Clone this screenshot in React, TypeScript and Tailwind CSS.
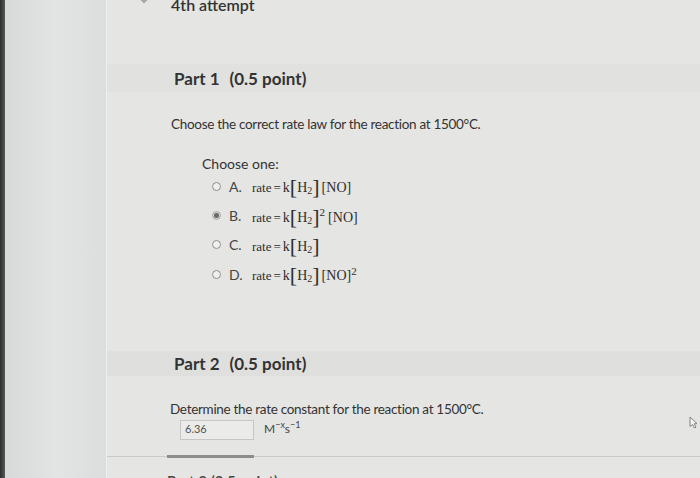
import React from "react";

const lato = { fontFamily: "Lato, 'Open Sans', sans-serif" };

function Radio({ checked }: { checked?: boolean }) {
  if (checked) {
    return (
      <span className="flex h-[9px] w-[9px] items-center justify-center rounded-full bg-[#cfcfcf] border border-[#b0b0b0]">
        <span className="h-[5px] w-[5px] rounded-full bg-[#6a6a6a]" />
      </span>
    );
  }
  return <span className="h-[9px] w-[9px] rounded-full border border-[#8e8e8e] bg-[#efefed]" />;
}

function Br({ c }: { c: string }) {
  return <span className="text-[22px] leading-none font-light relative top-[2px]">{c}</span>;
}

function H2() {
  return (
    <span>
      <Br c="[" />
      H<sub className="text-[10px] relative top-[2px]">2</sub>
      <Br c="]" />
    </span>
  );
}

function Formula({ kind }: { kind: "A" | "B" | "C" | "D" }) {
  return (
    <span
      className="flex items-baseline text-[14px] text-[#2e2e2e]"
      style={{ fontFamily: "'Liberation Serif', 'DejaVu Serif', serif" }}
    >
      <span className="text-[13px]">rate</span>
      <span className="mx-[2px] text-[13px]">=</span>
      <span>k</span>
      <H2 />
      {kind === "B" && <sup className="text-[11px] mr-[1px]">2</sup>}
      {kind !== "C" && <span className="ml-[2px]">[NO]</span>}
      {kind === "D" && <sup className="text-[11px]">2</sup>}
    </span>
  );
}

function Option({ letter, checked }: { letter: "A" | "B" | "C" | "D"; checked?: boolean }) {
  return (
    <div className="flex items-center h-[29.3px]">
      <div className="w-[17px] flex items-center">
        <Radio checked={checked} />
      </div>
      <span className="text-[14px] text-[#444] w-[23px]" style={lato}>
        {letter}.
      </span>
      <Formula kind={letter} />
    </div>
  );
}

export default function App() {
  return (
    <div className="relative flex h-[478px] w-[700px] overflow-hidden bg-[#e5e5e3]" style={lato}>
      {/* dark left edge */}
      <div className="w-[5px] shrink-0 bg-gradient-to-r from-[#2e2e2e] to-[#5a5a5a]" />
      {/* sidebar */}
      <div className="w-[102px] shrink-0 bg-gradient-to-r from-[#d8dada] via-[#e3e5e4] to-[#dcdedd] border-r border-[#efefed]" />
      {/* main */}
      <div className="relative flex flex-1 flex-col bg-[#e5e5e3] text-[#333]">
        {/* top: attempt */}
        <div className="flex items-end h-[12px] pl-[31px]">
          <svg width="12" height="8" viewBox="0 0 12 8" className="mb-[8px]">
            <path d="M1 1 L6 6 L11 1" fill="none" stroke="#a8a8a8" strokeWidth="2.2" />
          </svg>
          <span className="ml-[21px] text-[16px] font-semibold text-[#333] leading-none -mb-[1px]">4th attempt</span>
        </div>

        {/* Part 1 band */}
        <div className="mt-[52px] h-[34px] bg-[#e1e1df] flex items-center pl-[67px] pt-[2px]">
          <span className="text-[17px] font-bold text-[#333]">Part 1</span>
          <span className="ml-[10px] text-[17px] font-bold text-[#333]">(0.5 point)</span>
        </div>

        <div className="pl-[64px] mt-[22px] text-[13.5px] text-[#333] tracking-[-0.3px]">
          Choose the correct rate law for the reaction at 1500°C.
        </div>

        <div className="pl-[95px] mt-[19px] text-[14px] text-[#333]">Choose one:</div>

        <div className="pl-[105px] -mt-[2px] flex flex-col">
          <Option letter="A" />
          <Option letter="B" checked />
          <Option letter="C" />
          <Option letter="D" />
        </div>

        {/* Part 2 band */}
        <div className="mt-[62px] h-[27px] bg-[#dfdfdd] flex items-center pl-[67px]">
          <span className="text-[17px] font-bold text-[#333]">Part 2</span>
          <span className="ml-[10px] text-[17px] font-bold text-[#333]">(0.5 point)</span>
        </div>

        <div className="pl-[63px] mt-[23px] text-[13.5px] text-[#333] tracking-[-0.3px]">
          Determine the rate constant for the reaction at 1500°C.
        </div>

        <div className="pl-[73px] mt-[0px] flex items-start">
          <div className="w-[74px] h-[20px] border border-[#c6c6c4] bg-[#ebebe9] flex items-center pl-[4px] text-[11px] text-[#555]">
            6.36
          </div>
          <span className="ml-[10px] text-[12px] text-[#444] leading-none mt-[3px]">
            M<sup className="text-[9px]">−x</sup>s<sup className="text-[9px]">−1</sup>
          </span>
        </div>

        {/* bottom line */}
        <div className="mt-[15px] relative h-[3px]">
          <div className="absolute left-0 right-0 top-[1px] h-[1px] bg-[#c9c9c7]" />
          <div className="absolute left-[60px] top-0 h-[3px] w-[87px] bg-[#8c8c8c]" />
        </div>

        <div className="pl-[60px] mt-[16px] text-[15px] leading-[20px] font-semibold text-[#444]">Part 3 (0.5 point)</div>

        {/* cursor */}
        <svg className="absolute left-[582px] top-[416px]" width="9" height="13" viewBox="0 0 9 13">
          <path d="M1 1 L1 10.5 L3.5 8.5 L5.5 12 L7 11.2 L5.2 7.8 L8 7.6 Z" fill="#f5f5f5" stroke="#777" strokeWidth="0.9" />
        </svg>
      </div>
    </div>
  );
}
